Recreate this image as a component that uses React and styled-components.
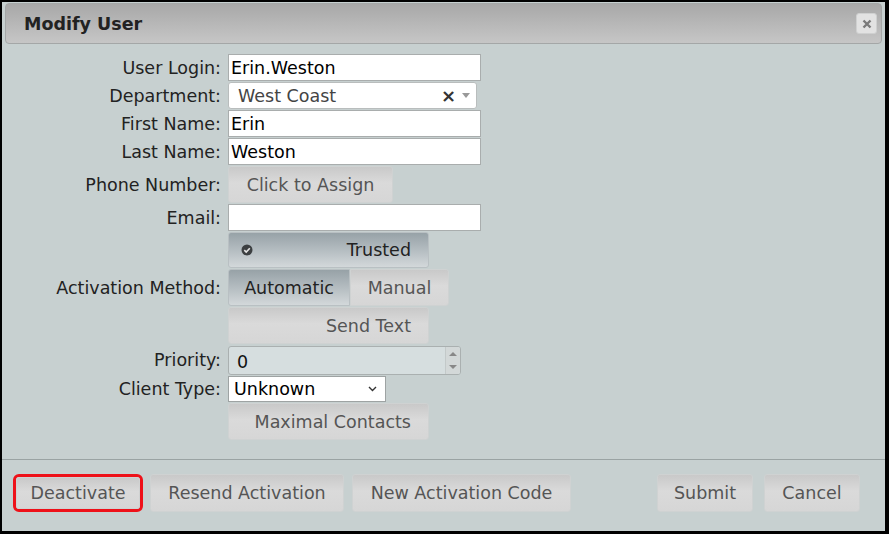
import React, { useState } from "react";
import styled, { createGlobalStyle, css } from "styled-components";

const GlobalStyle = createGlobalStyle`
  html, body {
    margin: 0;
    padding: 0;
    background: #000;
  }
  body {
    font-family: "DejaVu Sans", Verdana, sans-serif;
  }
`;

const Frame = styled.div`
  box-sizing: border-box;
  width: 889px;
  height: 534px;
  border-style: solid;
  border-color: #000;
  border-width: 2px 4px 3px 2px;
  background: #c7d0d0;
  display: flex;
  flex-direction: column;
`;

const TitleBar = styled.div`
  box-sizing: border-box;
  height: 41px;
  margin: 1px 3px 0 3px;
  padding: 0 4px 0 18px;
  border: 1px solid #a4a7a7;
  border-radius: 4px;
  background: linear-gradient(#a8a8a8, #c6c6c6);
  display: flex;
  align-items: center;
  justify-content: space-between;
`;

const Title = styled.h1`
  margin: 0;
  font-size: 17.5px;
  font-weight: bold;
  color: #222;
`;

const CloseButton = styled.button`
  width: 21px;
  height: 21px;
  padding: 0;
  border: 1px solid #cfd0d0;
  border-radius: 3px;
  background: #e2e2e2;
  display: flex;
  align-items: center;
  justify-content: center;
`;

const Form = styled.div`
  flex: 1;
  padding-top: 10px;
  display: grid;
  grid-template-columns: 219px auto;
  column-gap: 7px;
  row-gap: 1px;
  align-content: start;
  align-items: center;
`;

const Label = styled.label`
  font-size: 17.5px;
  color: #222;
  text-align: right;
  white-space: nowrap;
`;

const Field = styled.div`
  display: flex;
  justify-content: flex-start;
  padding-top: ${(p) => p.$top || 0}px;
`;

const TextInput = styled.input`
  box-sizing: border-box;
  width: 253px;
  height: 27px;
  margin: 0;
  padding: 0 2px;
  border: 1px solid #a9adad;
  background: #fff;
  font-family: inherit;
  font-size: 17.5px;
  color: #000;
  outline: none;
`;

const Combo = styled.div`
  box-sizing: border-box;
  width: 249px;
  height: 27px;
  padding: 0 6px 0 9px;
  border: 1px solid #b9bdbd;
  border-radius: 3px;
  background: #fff;
  display: flex;
  align-items: center;
  font-size: 17.5px;
  color: #444;
`;

const ComboText = styled.span`
  flex: 1;
`;

const ComboClear = styled.span`
  font-size: 18px;
  font-weight: bold;
  color: #333;
  margin-right: 6px;
`;

const Caret = styled.span`
  width: 0;
  height: 0;
  border-left: 4px solid transparent;
  border-right: 4px solid transparent;
  border-top: 5px solid #999;
`;

const buttonBase = css`
  box-sizing: border-box;
  margin: 0;
  border: 1px solid #cfd2d2;
  border-radius: 3px;
  font-family: inherit;
  font-size: 17.5px;
  color: #555;
  white-space: nowrap;
  cursor: pointer;
  display: flex;
  align-items: center;
  background: linear-gradient(#c9c9c9, #dadada 45%, #d6d6d6);
`;

const activeLook = css`
  background: linear-gradient(#97a2a7, #b7bfc3 55%, #d3d8da);
  color: #222;
  border-color: #b9c0c3;
`;

const Button = styled.button`
  ${buttonBase}
  height: ${(p) => p.$h || 37}px;
  width: ${(p) => (p.$w ? `${p.$w}px` : "auto")};
  padding: 0 18px;
  justify-content: center;
`;

const WideButton = styled.button`
  ${buttonBase}
  width: 201px;
  height: ${(p) => p.$h || 37}px;
  padding: 0 17px 0 12px;
  justify-content: space-between;
  ${(p) => p.$active && activeLook}
`;

const Segment = styled.div`
  display: flex;
`;

const SegButton = styled.button`
  ${buttonBase}
  height: 37px;
  width: ${(p) => p.$w}px;
  padding: 0;
  justify-content: center;
  border-radius: ${(p) => (p.$first ? "3px 0 0 3px" : "0 3px 3px 0")};
  ${(p) => p.$active && activeLook}
`;

const Spinner = styled.div`
  box-sizing: border-box;
  width: 233px;
  height: 29px;
  border: 1px solid #aab0b0;
  border-radius: 3px;
  background: #d6dedf;
  display: flex;
  overflow: hidden;
`;

const SpinValue = styled.span`
  flex: 1;
  padding: 2px 0 0 8px;
  font-size: 17.5px;
  color: #111;
  display: flex;
  align-items: center;
`;

const SpinArrows = styled.div`
  width: 14px;
  display: flex;
  flex-direction: column;
  background: #d3d8d8;
  border-left: 1px solid #c3c9c9;
`;

const SpinArrow = styled.span`
  flex: 1;
  display: flex;
  align-items: center;
  justify-content: center;
  &::after {
    content: "";
    border-left: 4px solid transparent;
    border-right: 4px solid transparent;
    ${(p) =>
      p.$up ? "border-bottom: 4px solid #888;" : "border-top: 4px solid #888;"}
  }
`;

const Select = styled.div`
  box-sizing: border-box;
  width: 158px;
  height: 26px;
  padding: 0 8px 0 5px;
  border: 1px solid #9ea3a3;
  background: #fff;
  display: flex;
  align-items: center;
  justify-content: space-between;
  font-size: 17.5px;
  color: #000;
`;

const Footer = styled.div`
  box-sizing: border-box;
  height: 72px;
  border-top: 1px solid #9aa3a3;
  padding: 14px 25px 0 11px;
  display: flex;
  align-items: flex-start;
  gap: 8px;
`;

const Highlight = styled.div`
  border: 3px solid #ee1119;
  border-radius: 6px;
  display: flex;
  margin-right: -1px;
`;

const Spacer = styled.div`
  flex: 1;
`;

const CheckIcon = () => (
  <svg width="12" height="12" viewBox="0 0 12 12">
    <circle cx="6" cy="6" r="5.5" fill="#3c3f41" />
    <path d="M3.3 6.2 L5.2 8 L8.8 4.2" stroke="#e6e6e6" strokeWidth="1.6" fill="none" />
  </svg>
);

export default function App() {
  const [method, setMethod] = useState("auto");

  return (
    <>
      <GlobalStyle />
      <Frame>
        <TitleBar>
          <Title>Modify User</Title>
          <CloseButton>
            <svg width="10" height="10" viewBox="0 0 10 10">
              <path d="M1.5 1.5 L8.5 8.5 M8.5 1.5 L1.5 8.5" stroke="#7a7a7a" strokeWidth="2.4" />
            </svg>
          </CloseButton>
        </TitleBar>

        <Form>
          <Label>User Login:</Label>
          <Field>
            <TextInput defaultValue="Erin.Weston" />
          </Field>

          <Label>Department:</Label>
          <Field>
            <Combo>
              <ComboText>West Coast</ComboText>
              <ComboClear>×</ComboClear>
              <Caret />
            </Combo>
          </Field>

          <Label>First Name:</Label>
          <Field>
            <TextInput defaultValue="Erin" />
          </Field>

          <Label>Last Name:</Label>
          <Field>
            <TextInput defaultValue="Weston" />
          </Field>

          <Label>Phone Number:</Label>
          <Field>
            <Button $w={165}>Click to Assign</Button>
          </Field>

          <Label>Email:</Label>
          <Field>
            <TextInput defaultValue="" />
          </Field>

          <Label />
          <Field>
            <WideButton $active $h={36}>
              <CheckIcon />
              <span>Trusted</span>
            </WideButton>
          </Field>

          <Label>Activation Method:</Label>
          <Field>
            <Segment>
              <SegButton
                $first
                $w={122}
                $active={method === "auto"}
                onClick={() => setMethod("auto")}
              >
                Automatic
              </SegButton>
              <SegButton
                $w={99}
                $active={method === "manual"}
                onClick={() => setMethod("manual")}
              >
                Manual
              </SegButton>
            </Segment>
          </Field>

          <Label />
          <Field>
            <WideButton $h={37}>
              <span />
              <span>Send Text</span>
            </WideButton>
          </Field>

          <Label>Priority:</Label>
          <Field $top={1}>
            <Spinner>
              <SpinValue>0</SpinValue>
              <SpinArrows>
                <SpinArrow $up />
                <SpinArrow />
              </SpinArrows>
            </Spinner>
          </Field>

          <Label>Client Type:</Label>
          <Field>
            <Select>
              <span>Unknown</span>
              <svg width="9" height="6" viewBox="0 0 9 6">
                <path d="M1 1 L4.5 4.5 L8 1" stroke="#333" strokeWidth="1.4" fill="none" />
              </svg>
            </Select>
          </Field>

          <Label />
          <Field>
            <WideButton $h={37}>
              <span />
              <span>Maximal Contacts</span>
            </WideButton>
          </Field>
        </Form>

        <Footer>
          <Highlight>
            <Button $h={32} $w={124}>Deactivate</Button>
          </Highlight>
          <Button $h={38} $w={194}>Resend Activation</Button>
          <Button $h={38} $w={219}>New Activation Code</Button>
          <Spacer />
          <Button $h={38} $w={96}>Submit</Button>
          <Button $h={38} $w={96} style={{ marginLeft: 3 }}>Cancel</Button>
        </Footer>
      </Frame>
    </>
  );
}
